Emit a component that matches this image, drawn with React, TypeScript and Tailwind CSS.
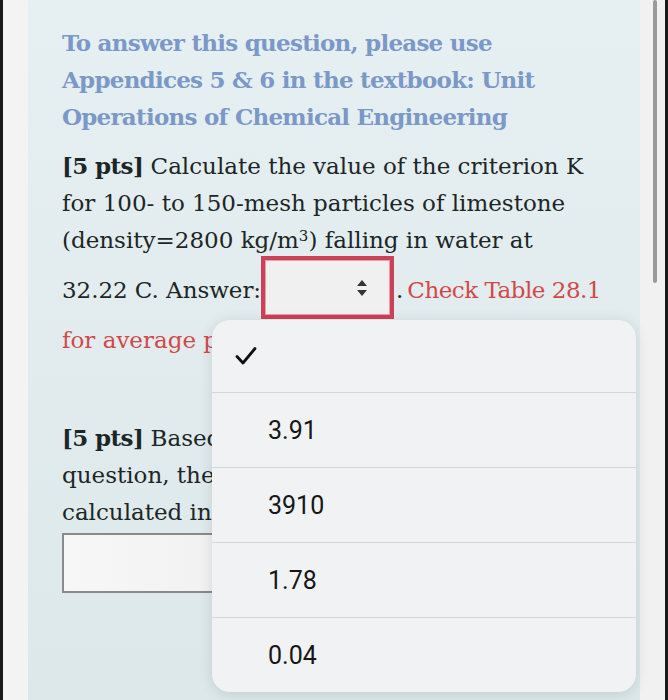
import React from 'react';

const serif = { fontFamily: '"DejaVu Serif", "Liberation Serif", serif' };
const sans = { fontFamily: 'Roboto, "Liberation Sans", sans-serif' };

const options = ['3.91', '3910', '1.78', '0.04'];

function SelectArrows() {
  return (
    <svg width="12" height="18" viewBox="0 0 12 18" className="ml-auto">
      <path d="M6 1 L11 7 H1 Z" fill="#333" />
      <path d="M6 17 L11 11 H1 Z" fill="#333" />
    </svg>
  );
}

function Check() {
  return (
    <svg width="22" height="20" viewBox="0 0 22 20">
      <path d="M2 10.5 L8 17 L20 2.5" fill="none" stroke="#111" strokeWidth="2.8" strokeLinecap="round" strokeLinejoin="round" />
    </svg>
  );
}

export default function App() {
  return (
    <div className="w-[668px] h-[700px] flex bg-black overflow-hidden">
      <div className="w-[3px] shrink-0 bg-[#1a1a1a]" />
      <div className="w-[25px] shrink-0 bg-[#f3f3f3]" />

      {/* Question panel */}
      <div
        className="relative flex-1 bg-gradient-to-b from-[#e6f0f3] via-[#e2ecee] to-[#dde8ea] pl-[34px] pt-[24px] text-[23px] leading-[37px] text-[#1c2626]"
        style={serif}
      >
        <div className="font-bold text-[#7b98c6] whitespace-nowrap tracking-[-0.75px]">
          To answer this question, please use
          <br />
          Appendices 5 &amp; 6 in the textbook: Unit
          <br />
          Operations of Chemical Engineering
        </div>

        <div className="mt-[12px] whitespace-nowrap">
          <div>
            <span className="font-bold tracking-[-0.6px]">[5 pts]</span> Calculate the value of the criterion K
          </div>
          <div>for 100- to 150-mesh particles of limestone</div>
          <div>
            (density=2800 kg/m<sup className="text-[15px]">3</sup>) falling in water at
          </div>
          <div className="flex items-center h-[63px]">
            <span className="tracking-[-0.05px]">32.22 C. Answer:</span>
            <div className="mt-[-6px] w-[133px] h-[63px] border-[4px] border-[#c9425a] bg-[#f1f0f1] flex items-center pr-[22px] shadow-[inset_0_0_0_1px_#ef9aa8]">
              <SelectArrows />
            </div>
            <span className="ml-[2px]">.</span>
            <span className="ml-[4px] text-[#d14848] tracking-[-0.5px]">Check Table 28.1</span>
          </div>
          <div className="w-[150px] overflow-hidden text-[#d14848]">for average particle size.</div>
        </div>

        <div className="mt-[60px] whitespace-nowrap">
          <div className="w-[150px] overflow-hidden">
            <span className="font-bold tracking-[-0.6px]">[5 pts]</span> Based on the answer to the previous
          </div>
          <div className="w-[150px] overflow-hidden">question, the settling velocity of the particles</div>
          <div className="w-[150px] overflow-hidden">calculated in ft/s is</div>
          <div className="mt-[2px] w-[260px] h-[60px] border-2 border-[#8a8a8a] bg-gradient-to-r from-[#f7f7f7] to-[#f0eeee]" />
        </div>

        {/* Native picker popover */}
        <div
          className="absolute left-[184px] top-[320px] w-[424px] h-[372px] rounded-[18px] bg-[#f1f2f4] shadow-[0_2px_14px_rgba(0,0,0,0.12)] overflow-hidden"
          style={sans}
        >
          <div className="h-[73px] flex items-center pl-[23px] border-b border-[#d3d6da]">
            <Check />
          </div>
          {options.map((o, i) => (
            <div
              key={o}
              className={`h-[75px] flex items-center pl-[56px] text-[25px] text-[#161616] ${i < options.length - 1 ? 'border-b border-[#d3d6da]' : ''}`}
            >
              {o}
            </div>
          ))}
        </div>
      </div>

      {/* Right gutter with scrollbar */}
      <div className="w-[25px] shrink-0 bg-[#f1f1f1] flex justify-center pl-[5px]">
        <div className="w-[4px] h-[283px] rounded-full bg-[#9a9a9a]" />
      </div>
      <div className="w-[3px] shrink-0 bg-[#1a1a1a]" />
    </div>
  );
}
